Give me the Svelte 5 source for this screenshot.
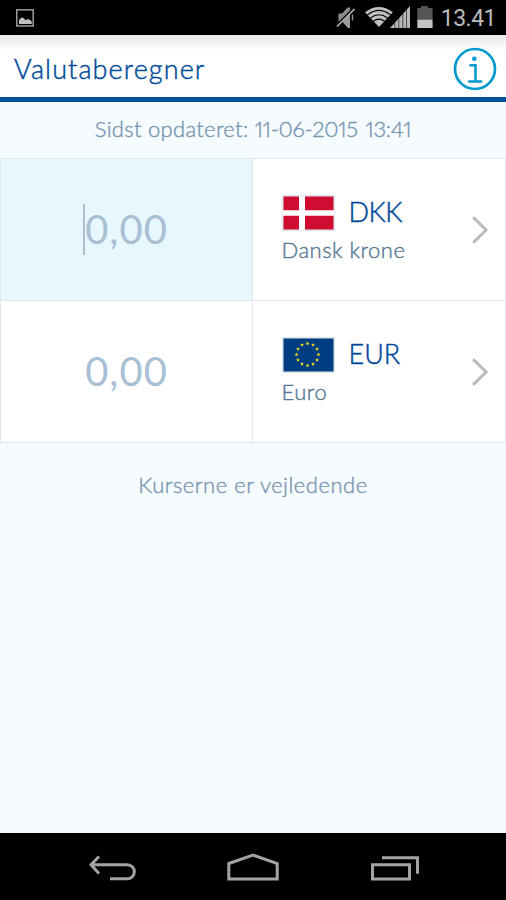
<script>
    let active = 'DKK';

    let rows = [
        { code: 'DKK', name: 'Dansk krone', amount: '0,00' },
        { code: 'EUR', name: 'Euro', amount: '0,00' },
    ];

    // the twelve stars on the EU flag
    const stars = Array.from({ length: 12 }, (_, i) => {
        const a = (i * Math.PI) / 6;
        return { x: 25.5 + 11 * Math.sin(a), y: 17.5 - 11 * Math.cos(a) };
    });

    function starPoints(cx, cy) {
        return Array.from({ length: 10 }, (_, i) => {
            const r = i % 2 ? 0.9 : 2;
            const a = (i * Math.PI) / 5;
            return `${cx + r * Math.sin(a)},${cy - r * Math.cos(a)}`;
        }).join(' ');
    }
</script>

<div class="screen">
    <div class="status">
        <svg width="506" height="35" viewBox="0 0 506 35">
            <rect x="16.8" y="9.8" width="16.4" height="16.2" fill="none" stroke="#9c9c9c" stroke-width="1.5" />
            <path d="M19 24V20l2.5-2.5 2 .5 2 2.2 2.5-1.2 1.5.8 2.3 1.8V24z" fill="#c0c0c0" />
            <path d="M338.500 13.500h3.500l5.500-6h2.500v3l-11.500 11.500z" fill="#8d8d8d" />
            <path d="M342.500 22l7.500-8v14h-2z" fill="#9a9a9a" />
            <path d="M352.500 14.500v6" stroke="#8d8d8d" stroke-width="1.500" />
            <path d="M337 26.500l17.500-17.500" stroke="#b2b2b2" stroke-width="1.700" />
            <path d="M365 12.300Q379 1.700 392.800 12.300L379 27z" fill="#c0c0c0" />
            <g fill="none" stroke="#000" stroke-width="1.200">
                <path d="M367.500 14.900Q379 6 390.500 14.900" />
                <path d="M370.500 18Q379 11.500 387.500 18" />
                <path d="M373.400 21.200Q379 17 384.600 21.200" />
            </g>
            <path d="M390 28L410 6v22z" fill="#b8b8b8" />
            <path d="M394.800 20v9M398.800 16v13M402.800 12v17M406.500 8v21" stroke="#000" stroke-width="0.600" />
            <path d="M421 6h7v2h4.600v11.500h-15.300V8h3.700z" fill="#555" />
            <path d="M417.300 19.500h15.300V28h-15.300z" fill="#c4c4c4" />
        </svg>
        <span class="clock">13.41</span>
    </div>

    <header>
        <h1>Valutaberegner</h1>
        <svg width="44" height="44" viewBox="0 0 44 44">
            <circle cx="22" cy="22" r="20" fill="none" stroke="#0099cf" stroke-width="2.700" />
            <circle cx="21.300" cy="11.700" r="2.300" fill="#0099cf" />
            <path d="M17.500 18.300h5V34M16.200 34.500h12" fill="none" stroke="#0099cf" stroke-width="2.600" stroke-linecap="round" />
        </svg>
    </header>

    <p class="updated">Sidst opdateret: <span class="date">11-06-2015 13:41</span></p>

    <div class="rows">
        {#each rows as row}
            <div class="row">
                <div class="amount" class:active={row.code === active}>
                    <span class="value">{row.amount}</span>
                </div>
                <div class="currency">
                    <div class="info">
                        <div class="top">
                            <svg class="flag" width="53" height="36" viewBox="0 0 53 36">
                                <rect width="53" height="36" fill="#dfe7ee" />
                                {#if row.code === 'DKK'}
                                    <path d="M1.500 1.500h50v33h-50z" fill="#d00c33" />
                                    <path d="M17 1h6v34h-6zM1 15.300h51v5.400H1z" fill="#fff" />
                                {:else}
                                    <path d="M1.500 1.500h50v33h-50z" fill="#003d80" />
                                    {#each stars as star}
                                        <polygon points={starPoints(star.x, star.y)} fill="#f5e31b" />
                                    {/each}
                                {/if}
                            </svg>
                            <span class="code" class:tight={row.code === 'DKK'}>{row.code}</span>
                        </div>
                        <div class="name">{row.name}</div>
                    </div>
                    <svg class="chevron" width="18" height="30" viewBox="0 0 18 30">
                        <path d="M3 3.200L15.200 15 3 26.800" fill="none" stroke="#bababa" stroke-width="3" stroke-linecap="round" stroke-linejoin="round" />
                    </svg>
                </div>
            </div>
        {/each}
    </div>

    <p class="note">Kurserne er vejledende</p>

    <nav>
        <svg width="506" height="67" viewBox="0 0 506 67">
            <g fill="none" stroke="#a3a3a3" stroke-width="3">
                <path d="M110 45.800h17.300a7 7 0 0 0 0-14.100H91M99 23.500l-8 8.200 8 8.700" />
                <path d="M228.800 30.500L253 22l24.200 8.500v15.500h-48.400z" />
                <path d="M372.500 31.700h37v14.300h-37zM382 24.700h35.500v16" />
            </g>
        </svg>
    </nav>
</div>

<style>
    :global(body) {
        background: #f5fbff;
    }

    .screen {
        width: 506px;
        height: 900px;
        display: flex;
        flex-direction: column;
        background: #f5fbff;
        font-family: Lato, "Liberation Sans", sans-serif;
    }

    .status {
        position: relative;
        height: 35px;
        background: #000;
    }

    svg {
        display: block;
        flex: none;
    }

    .clock {
        position: absolute;
        right: 10px;
        top: 4px;
        color: #bcbcbc;
        font: 23px/29px Roboto, sans-serif;
        letter-spacing: -0.500px;
        white-space: nowrap;
    }

    header {
        box-sizing: border-box;
        height: 67px;
        padding: 0 9px 0 14px;
        display: flex;
        align-items: center;
        justify-content: space-between;
        background: linear-gradient(#e9e9e9, #fff 16px);
        border-bottom: 5px solid #00529c;
    }

    h1 {
        margin: 0 0 -5px;
        color: #004b98;
        font-size: 27px;
        line-height: 32px;
        font-weight: 300;
        letter-spacing: 1.100px;
        -webkit-text-stroke: 0.450px #004b98;
    }

    header svg {
        margin-top: 6px;
    }

    p {
        margin: 0;
        text-align: center;
        color: #7897af;
        font-size: 22px;
        line-height: 26px;
        font-weight: 300;
        -webkit-text-stroke: 0.400px #7897af;
    }

    .updated {
        height: 42px;
        padding-top: 14px;
        letter-spacing: 0.300px;
    }

    .date {
        font-variant-numeric: proportional-nums;
        letter-spacing: -0.300px;
        word-spacing: 2px;
    }

    .rows {
        border: 1px solid #e0e8f0;
        border-bottom: 0;
    }

    .row {
        height: 141px;
        display: grid;
        grid-template-columns: 252px 1fr;
        border-bottom: 1px solid #e0e8f0;
        background: #fff;
    }

    .amount {
        display: flex;
        align-items: center;
        justify-content: center;
        border-right: 1px solid #e0e8f0;
    }

    .amount.active {
        background: #e6f8fd;
    }

    .value {
        position: relative;
        margin-top: -2px;
        color: #a9c0d4;
        font-size: 40px;
        line-height: 52px;
        letter-spacing: 1px;
    }

    .active .value::before {
        content: '';
        position: absolute;
        left: -2px;
        top: 1px;
        width: 1.500px;
        height: 51px;
        background: #aebfc9;
    }

    .currency {
        display: flex;
        align-items: center;
        justify-content: space-between;
        padding: 0 16px 0 28.500px;
    }

    .top {
        display: flex;
        align-items: center;
        gap: 14px;
        height: 36px;
    }

    .code {
        color: #00479b;
        font-size: 27px;
        line-height: 32px;
        font-weight: 300;
        margin-top: -3px;
        -webkit-text-stroke: 0.450px #00479b;
    }

    .tight {
        letter-spacing: -0.500px;
    }

    .name {
        margin-top: 6px;
        margin-bottom: 1px;
        color: #587893;
        font-size: 22px;
        line-height: 26px;
        font-weight: 300;
        letter-spacing: 0.500px;
        -webkit-text-stroke: 0.400px #587893;
    }

    .note {
        margin-top: 29px;
        letter-spacing: 0.500px;
    }

    nav {
        height: 67px;
        margin-top: auto;
        background: #000;
    }
</style>
